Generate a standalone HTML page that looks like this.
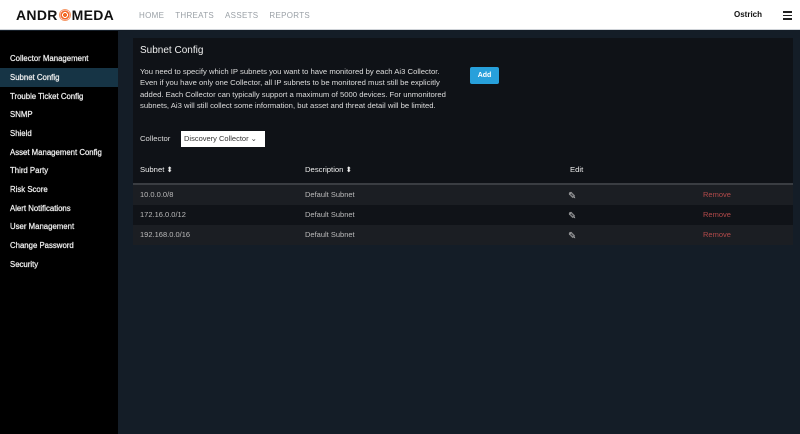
<!DOCTYPE html>
<html><head><style>
*{margin:0;padding:0;box-sizing:border-box}
body{width:800px;height:434px;overflow:hidden;background:#141d27;font-family:"Liberation Sans",sans-serif;position:relative}
.hdr{position:absolute;left:0;top:0;width:800px;height:30px;background:#fff;border-bottom:1px solid #cfd3d8}
.logo{position:absolute;left:16px;top:7px;font-size:14px;font-weight:bold;letter-spacing:0.3px;color:#111}
.logo .o{display:inline-block;width:12px;height:12px;border-radius:50%;background:radial-gradient(circle,#f26b2a 0 2px,#fff 2px 3px,#f26b2a 3px 4.5px,#fde 4.5px 5px,#f59a6a 5px);vertical-align:-1px;margin:0 1px}
.nav{position:absolute;left:139px;top:11px;font-size:8px;color:#9aa0a6;letter-spacing:0.3px}
.nav span{margin-right:11px}
.user{position:absolute;left:734px;top:10px;font-size:8px;font-weight:bold;color:#111}
.ham{position:absolute;left:783px;top:11px;width:9px}
.ham i{display:block;height:1.5px;background:#222;margin-bottom:2px}
.side{position:absolute;left:0;top:31px;width:118px;height:403px;background:#000}
.side div{position:absolute;left:0;width:118px;height:19px;font-size:7.8px;color:#eee;padding-left:10px;line-height:19px;-webkit-text-stroke:0.25px #eee}
.side .act{background:#163445}
.panel{position:absolute;left:133px;top:38px;width:660px;height:207px;background:#0f1217}
.title{position:absolute;left:7px;top:7px;font-size:10px;color:#eee}
.desc{position:absolute;left:7px;top:28px;width:314px;font-size:7.7px;line-height:11.3px;color:#ddd}
.add{position:absolute;left:337px;top:29px;width:29px;height:17px;background:#27a0db;border-radius:2px;color:#fff;font-size:7px;font-weight:bold;text-align:center;line-height:17px}
.coll{position:absolute;left:7px;top:96px;font-size:7.7px;color:#ddd}
.sel{position:absolute;left:48px;top:93px;width:84px;height:16px;background:#fff;font-size:7.5px;color:#333;line-height:16px;padding-left:3px}
.th{position:absolute;top:127px;font-size:7.7px;color:#eee}
.line{position:absolute;left:0;top:145px;width:660px;height:2px;background:#3a3d42}
.row{position:absolute;left:0;width:660px;height:20px;font-size:7.5px;color:#bbb;line-height:20px}
.row span{position:absolute}
.row .pen{font-size:10px;color:#ccc;left:435px;top:2px}
.rm{color:#b34a4a}
</style></head><body>
<div class="hdr"><div class="logo">ANDR<span class="o"></span>MEDA</div>
<div class="nav"><span>HOME</span><span>THREATS</span><span>ASSETS</span><span>REPORTS</span></div>
<div class="user">Ostrich</div><div class="ham"><i></i><i></i><i></i></div></div>
<div class="side">
<div style="top:18px">Collector Management</div>
<div class="act" style="top:37px">Subnet Config</div>
<div style="top:56px">Trouble Ticket Config</div>
<div style="top:74px">SNMP</div>
<div style="top:93px">Shield</div>
<div style="top:112px">Asset Management Config</div>
<div style="top:130px">Third Party</div>
<div style="top:149px">Risk Score</div>
<div style="top:168px">Alert Notifications</div>
<div style="top:186px">User Management</div>
<div style="top:205px">Change Password</div>
<div style="top:224px">Security</div>
</div>
<div class="panel">
<div class="title">Subnet Config</div>
<div class="desc">You need to specify which IP subnets you want to have monitored by each Ai3 Collector. Even if you have only one Collector, all IP subnets to be monitored must still be explicitly added. Each Collector can typically support a maximum of 5000 devices. For unmonitored subnets, Ai3 will still collect some information, but asset and threat detail will be limited.</div>
<div class="add">Add</div>
<div class="coll">Collector</div>
<div class="sel">Discovery Collector &#8964;</div>
<div class="th" style="left:7px">Subnet &#x2B0D;</div>
<div class="th" style="left:172px">Description &#x2B0D;</div>
<div class="th" style="left:437px">Edit</div>
<div class="line"></div>
<div class="row" style="top:147px;background:#1b1e23"><span style="left:7px">10.0.0.0/8</span><span style="left:172px">Default Subnet</span><span class="pen">&#x270E;</span><span class="rm" style="left:570px">Remove</span></div>
<div class="row" style="top:167px;background:#101318"><span style="left:7px">172.16.0.0/12</span><span style="left:172px">Default Subnet</span><span class="pen">&#x270E;</span><span class="rm" style="left:570px">Remove</span></div>
<div class="row" style="top:187px;background:#1b1e23"><span style="left:7px">192.168.0.0/16</span><span style="left:172px">Default Subnet</span><span class="pen">&#x270E;</span><span class="rm" style="left:570px">Remove</span></div>
</div>
</body></html>
